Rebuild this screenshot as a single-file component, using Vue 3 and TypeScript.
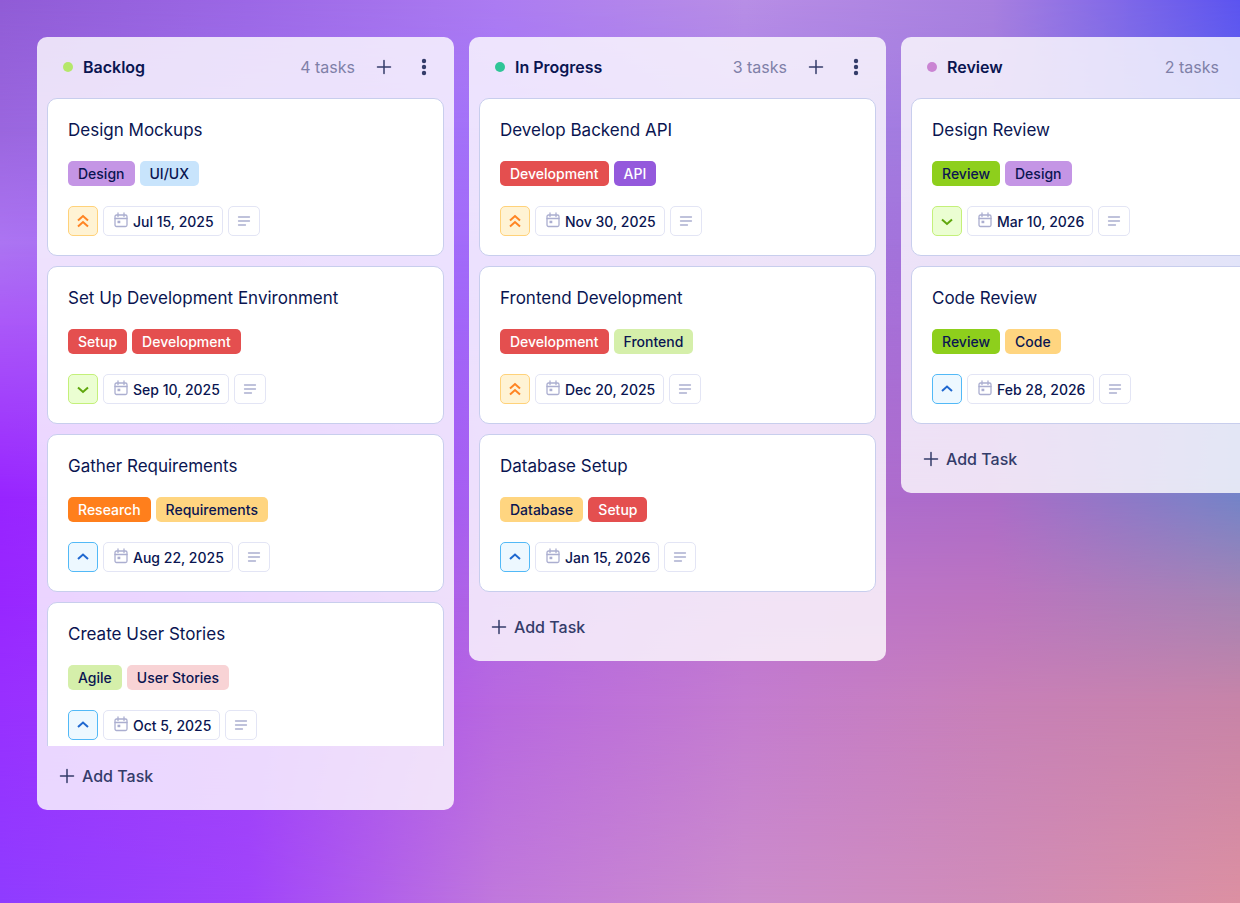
<script setup lang="ts">
interface Tag { text: string; tone: string }
interface Task { title: string; tags: Tag[]; priority: 'high' | 'medium' | 'low'; due: string }
interface Column { name: string; color: string; tasks: Task[] }

const tag = (text: string, tone: string): Tag => ({ text, tone })

const columns: Column[] = [
  {
    name: 'Backlog',
    color: '#b5e76b',
    tasks: [
      { title: 'Design Mockups', tags: [tag('Design', 'lilac'), tag('UI/UX', 'sky')], priority: 'high', due: 'Jul 15, 2025' },
      { title: 'Set Up Development Environment', tags: [tag('Setup', 'red'), tag('Development', 'red')], priority: 'low', due: 'Sep 10, 2025' },
      { title: 'Gather Requirements', tags: [tag('Research', 'orange'), tag('Requirements', 'amber')], priority: 'medium', due: 'Aug 22, 2025' },
      { title: 'Create User Stories', tags: [tag('Agile', 'mint'), tag('User Stories', 'pink')], priority: 'medium', due: 'Oct 5, 2025' },
    ],
  },
  {
    name: 'In Progress',
    color: '#2fc597',
    tasks: [
      { title: 'Develop Backend API', tags: [tag('Development', 'red'), tag('API', 'violet')], priority: 'high', due: 'Nov 30, 2025' },
      { title: 'Frontend Development', tags: [tag('Development', 'red'), tag('Frontend', 'mint')], priority: 'high', due: 'Dec 20, 2025' },
      { title: 'Database Setup', tags: [tag('Database', 'amber'), tag('Setup', 'red')], priority: 'medium', due: 'Jan 15, 2026' },
    ],
  },
  {
    name: 'Review',
    color: '#ca84d3',
    tasks: [
      { title: 'Design Review', tags: [tag('Review', 'green'), tag('Design', 'lilac')], priority: 'low', due: 'Mar 10, 2026' },
      { title: 'Code Review', tags: [tag('Review', 'green'), tag('Code', 'amber')], priority: 'medium', due: 'Feb 28, 2026' },
    ],
  },
]

const chevrons: Record<Task['priority'], string> = {
  high: 'M5 9.5 10 5l5 4.500M5 15.500 10 11l5 4.500',
  medium: 'M5 12 10 7.500l5 4.500',
  low: 'M5 8.500 10 13l5-4.500',
}

// Colour rows of the backdrop, blended vertically from one to the next.
const backdrop: { at: number; colors: string[] }[] = [
  { at: 0, colors: ['#905cd6', '#9c68e6', '#ac7cf2', '#b88ee6', '#a880e0', '#5c54f0'] },
  { at: 14, colors: ['#9a66de', '#a070ee', '#a472fa', '#a880e8', '#a07adc', '#6468ee'] },
  { at: 27, colors: ['#ac74f2', '#a464f6', '#a26cfa', '#a878e0', '#a070d8', '#7078e0'] },
  { at: 36, colors: ['#aa58f8', '#a054fa', '#a268f8', '#ac74dc', '#a46cd4', '#7480d8'] },
  { at: 55, colors: ['#9824ff', '#9c3cfc', '#a864f0', '#b06cd4', '#ac6cc8', '#7484c8'] },
  { at: 66, colors: ['#9826ff', '#9e3cfc', '#b068e4', '#bc74d0', '#bc74c0', '#a484b4'] },
  { at: 78, colors: ['#9830ff', '#a040fa', '#b868e0', '#c47cd0', '#c880b8', '#c884a8'] },
  { at: 100, colors: ['#8f3cff', '#a044fa', '#c078dc', '#cc8ccc', '#d08cb8', '#dc90a2'] },
]
const rowStyle = (i: number) => ({
  backgroundImage: `linear-gradient(to right, ${backdrop[i].colors.join(', ')})`,
  maskImage: i ? `linear-gradient(to bottom, transparent ${backdrop[i - 1].at}%, #000 ${backdrop[i].at}%)` : 'none',
})
</script>

<template>
  <div class="page">
    <div class="backdrop" aria-hidden="true">
      <div v-for="(row, i) in backdrop" :key="row.at" :style="rowStyle(i)"></div>
    </div>
    <main class="board">
      <section v-for="col in columns" :key="col.name" class="column">
        <header class="head">
          <span class="dot" :style="{ background: col.color }"></span>
          <h2>{{ col.name }}</h2>
          <span class="count">{{ col.tasks.length }} tasks</span>
          <button class="icon-btn" type="button" :aria-label="`Add task to ${col.name}`">
            <svg width="16" height="16" viewBox="0 0 16 16"><path d="M8 1.500v13M1.500 8h13" /></svg>
          </button>
          <button class="icon-btn" type="button" :aria-label="`${col.name} menu`">
            <svg class="dots" width="6" height="18" viewBox="0 0 6 18">
              <circle cx="3" cy="3" r="2.200" /><circle cx="3" cy="9" r="2.200" /><circle cx="3" cy="15" r="2.200" />
            </svg>
          </button>
        </header>
        <div class="list">
          <article v-for="task in col.tasks" :key="task.title" class="card">
            <h3>{{ task.title }}</h3>
            <div class="tags">
              <span v-for="t in task.tags" :key="t.text" class="tag" :class="t.tone">{{ t.text }}</span>
            </div>
            <div class="meta">
              <button class="chip priority" :class="task.priority" type="button" :aria-label="`Priority: ${task.priority}`">
                <svg width="20" height="20" viewBox="0 0 20 20"><path :d="chevrons[task.priority]" /></svg>
              </button>
              <button class="chip date" type="button">
                <svg width="14" height="18" viewBox="0 0 14 18">
                  <rect x="1" y="3" width="12" height="11.500" rx="1.500" />
                  <path d="M1 6.500h12M4 1v3.500M10 1v3.500" />
                  <rect class="day" x="3.500" y="8.700" width="2.800" height="2.500" />
                </svg>
                {{ task.due }}
              </button>
              <button class="chip notes" type="button" aria-label="Description">
                <svg width="14" height="12" viewBox="0 0 14 12"><path d="M1.500 2h11M1.500 6h11M1.500 10H8.500" /></svg>
              </button>
            </div>
          </article>
        </div>
        <button class="add" type="button">
          <svg width="16" height="16" viewBox="0 0 16 16"><path d="M8 1.500v13M1.500 8h13" /></svg>
          Add Task
        </button>
      </section>
    </main>
  </div>
</template>

<style>
body { overflow: hidden; }
</style>

<style scoped>
.page {
  display: grid;
  height: 100vh;
  grid-template: minmax(0, 1fr) / minmax(0, 1fr);
  overflow: hidden;
  font-family: Inter, "Liberation Sans", sans-serif;
  color: #0a1551;
}
.backdrop, .board { grid-area: 1 / 1; }
.backdrop { display: grid; }
.backdrop > div { grid-area: 1 / 1; }
.board {
  z-index: 1;
  display: flex;
  align-items: flex-start;
  gap: 15px;
  padding: 37px 37px 93px;
}
.column {
  display: flex;
  flex: 0 0 417px;
  flex-direction: column;
  box-sizing: border-box;
  max-height: 100%;
  padding: 0 10px;
  border-radius: 10px;
  background: rgba(255, 255, 255, 0.8);
}
button {
  padding: 0;
  border: 0;
  background: none;
  color: inherit;
  font: inherit;
  cursor: pointer;
}
svg {
  display: block;
  fill: none;
  stroke: currentColor;
  stroke-linecap: round;
  stroke-linejoin: round;
  stroke-width: 1.5;
}
.head {
  display: flex;
  flex: none;
  align-items: center;
  height: 60px;
  margin-bottom: 1px;
  padding: 0 10px 0 16px;
}
.dot {
  width: 10px;
  height: 10px;
  margin-right: 10px;
  border-radius: 50%;
}
h2, h3 { margin: 0; }
h2 {
  flex: 1;
  font-size: 16px;
  font-weight: 600;
  line-height: 22px;
}
.count {
  margin-right: 11px;
  color: #7f80a8;
  font-size: 16px;
}
.icon-btn {
  display: grid;
  place-items: center;
  width: 36px;
  height: 30px;
  color: #343c6a;
}
.icon-btn + .icon-btn { width: 20px; margin-left: 12px; }
.dots { fill: currentColor; stroke: none; }
.list {
  display: flex;
  flex-direction: column;
  gap: 10px;
  min-height: 0;
  overflow: hidden;
}
.card {
  display: grid;
  flex: none;
  gap: 20px;
  padding: 20px 20px 19px;
  border: 1px solid #c8ceed;
  border-radius: 10px;
  background: #fff;
}
h3 {
  font-size: 17px;
  font-weight: 400;
  line-height: 22px;
}
.tags, .meta { display: flex; gap: 5px; }
.tag {
  padding: 0 10px;
  border-radius: 5px;
  font-size: 14px;
  font-weight: 500;
  line-height: 25px;
}
.lilac { background: #c495e5; }
.sky { background: #c8e4fc; }
.red { background: #e44f4f; color: #fff; }
.orange { background: #ff7f1c; color: #fff; }
.amber { background: #ffd580; }
.mint { background: #d5efaa; }
.pink { background: #f8d3d5; }
.violet { background: #9459dc; color: #fff; }
.green { background: #8ecf1c; }
.chip {
  display: flex;
  align-items: center;
  justify-content: center;
  box-sizing: border-box;
  height: 30px;
  border: 1px solid #e3e5f5;
  border-radius: 5px;
}
.priority { width: 30px; }
.priority svg { stroke-width: 2; stroke-linecap: butt; stroke-linejoin: miter; }
.high { border-color: #ffd27a; background: #fff3d4; color: #ff8423; }
.medium { border-color: #52b9f7; background: #edf8ff; color: #1f68d0; }
.low { border-color: #c4f07a; background: #ebfed2; color: #5fa60c; }
.date {
  gap: 5px;
  padding: 0 8px 0 10px;
  font-size: 14px;
  font-weight: 500;
}
.date svg { color: #abaed0; stroke-width: 1.3; }
.date .day { fill: currentColor; stroke: none; }
.notes { width: 32px; color: #abaed0; }
.notes svg { stroke-width: 1.3; }
.add {
  display: flex;
  flex: none;
  align-items: center;
  gap: 7px;
  height: 60px;
  margin-bottom: 4px;
  padding-left: 12px;
  color: #343c6a;
  font-size: 16px;
  font-weight: 500;
}
.column:not(:first-child) .list { padding-bottom: 5px; }
</style>
